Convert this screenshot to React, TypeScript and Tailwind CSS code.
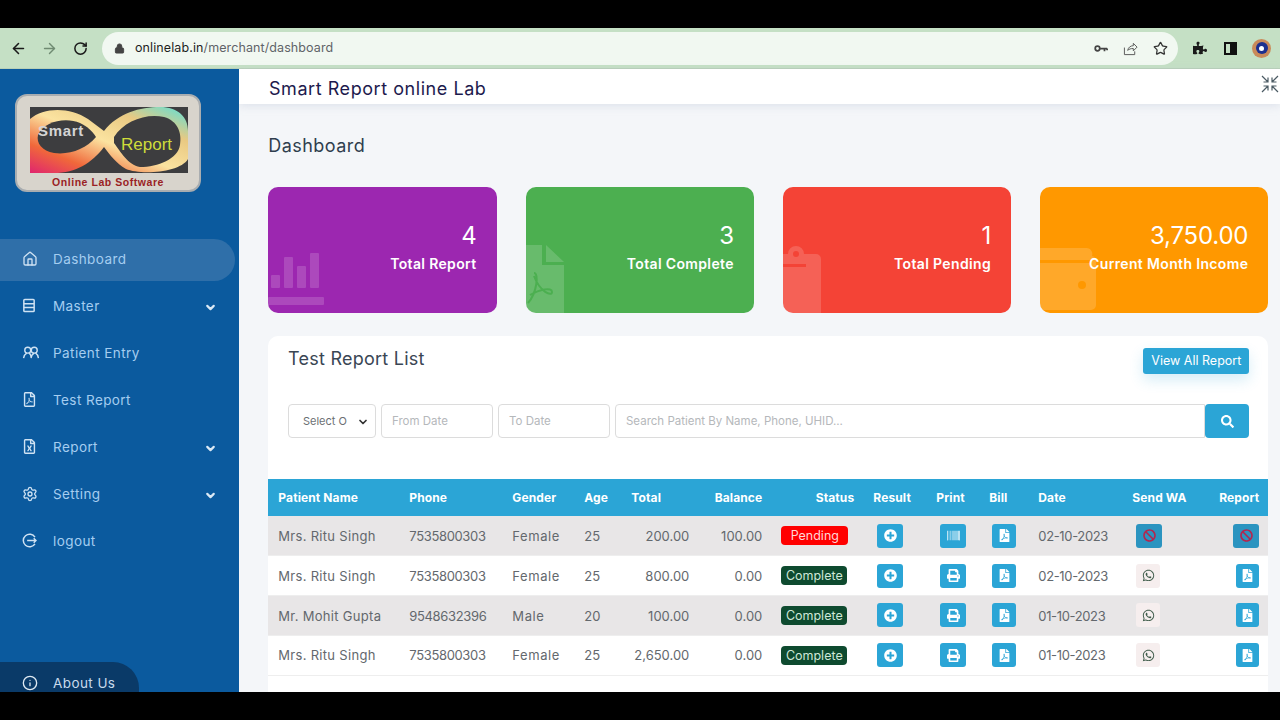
import { ArrowLeft, ArrowRight, RotateCw, Lock, Star, House, Settings, Info, ChevronDown } from "lucide-react";
import { FaPuzzlePiece, FaPlusCircle, FaPrint, FaFilePdf, FaBarcode, FaBan, FaWhatsapp, FaSearch, FaRegFilePdf, FaRegFileExcel } from "react-icons/fa";

const font = "font-['Inter','Liberation_Sans',sans-serif]";

const MasterIcon = () => (
  <svg viewBox="0 0 14 16" className="h-[15px] w-[14px]" fill="none" stroke="currentColor" strokeWidth="1.6">
    <rect x="1.5" y="1.5" width="11" height="13" rx="1" />
    <path d="M1.500 6h11M1.500 10h11" />
  </svg>
);

const PatientIcon = () => (
  <svg viewBox="0 0 18 14" className="h-[13px] w-[18px]" fill="none" stroke="currentColor" strokeWidth="1.5">
    <circle cx="5.5" cy="4.5" r="3.2" />
    <circle cx="12.5" cy="4.5" r="3.2" />
    <path d="M1 13c.4-3 2-4.600 3.400-5.400M7 7.600c1.200.7 2 2.200 2.300 5.400M9 13c.4-3 2-4.600 3.400-5.400M14 7.600c1.400.8 2.600 2.400 3 5.400" />
  </svg>
);

const LogoutIcon = () => (
  <svg viewBox="0 0 16 16" className="h-[15px] w-[15px]" fill="none" stroke="currentColor" strokeWidth="1.6">
    <path d="M13.800 4.500A6.700 6.700 0 1 0 13.800 11.500" />
    <path d="M5.500 8h9.500M12.500 5.500 15 8l-2.500 2.500" />
  </svg>
);

const nav = [
  { label: "Dashboard", icon: <House size={16} />, active: true },
  { label: "Master", icon: <MasterIcon />, arrow: true },
  { label: "Patient Entry", icon: <PatientIcon /> },
  { label: "Test Report", icon: <FaRegFilePdf size={15} /> },
  { label: "Report", icon: <FaRegFileExcel size={15} />, arrow: true },
  { label: "Setting", icon: <Settings size={16} />, arrow: true },
  { label: "logout", icon: <LogoutIcon /> },
];

const rows = [
  { name: "Mrs. Ritu Singh", phone: "7535800303", gender: "Female", age: "25", total: "200.00", balance: "100.00", status: "Pending", date: "02-10-2023" },
  { name: "Mrs. Ritu Singh", phone: "7535800303", gender: "Female", age: "25", total: "800.00", balance: "0.00", status: "Complete", date: "02-10-2023" },
  { name: "Mr. Mohit Gupta", phone: "9548632396", gender: "Male", age: "20", total: "100.00", balance: "0.00", status: "Complete", date: "01-10-2023" },
  { name: "Mrs. Ritu Singh", phone: "7535800303", gender: "Female", age: "25", total: "2,650.00", balance: "0.00", status: "Complete", date: "01-10-2023" },
];

const Logo = () => (
  <div className="ml-[15px] mt-[25px] h-[98px] w-[186px] rounded-[12px] border-2 border-[#a9adb0] bg-[#d8d4cc] px-[13px] pt-[11px]">
    <svg viewBox="0 0 158 66" className="h-[66px] w-[158px] bg-[#3d3d3f]">
      <defs>
        <linearGradient id="inf" x1="0" y1="1" x2="1" y2="0">
          <stop offset="0" stopColor="#e0256f" />
          <stop offset=".22" stopColor="#f0683a" />
          <stop offset=".48" stopColor="#fbe3a0" />
          <stop offset=".74" stopColor="#e9c982" />
          <stop offset="1" stopColor="#5ce0d8" />
        </linearGradient>
      </defs>
      <path d="M0 12C14 0 40 0 58 12L74 24C88 6 110 0 130 0 148 0 158 10 158 24V52C150 66 110 68 96 62 86 56 80 48 74 40 62 56 46 66 24 66H0Z" fill="url(#inf)" />
      <path d="M8 28C14 14 36 10 50 16 58 20 62 24 66 30 56 42 40 48 24 46 12 44 6 36 8 28Z" fill="#3d3d3f" />
      <path d="M84 30C94 14 116 6 134 10 148 14 152 26 150 38 148 52 128 60 110 60 98 58 90 44 84 36Z" fill="#3d3d3f" />
      <text x="8" y="29" fill="#d4d4d4" fontSize="15" fontWeight="700" letterSpacing=".7" fontFamily="Liberation Sans">Smart</text>
      <text x="91" y="43" fill="#cfdc3a" fontSize="17" fontFamily="Liberation Sans">Report</text>
    </svg>
    <div className="pt-[2px] text-center font-['Liberation_Sans',sans-serif] text-[10.500px] leading-[14px] font-bold tracking-[.55px] whitespace-nowrap text-[#9a1f24]">Online Lab Software</div>
  </div>
);

const Sidebar = () => (
  <aside className="relative flex h-full w-[239px] shrink-0 flex-col overflow-hidden bg-[#0b5a9e]">
    <Logo />
    <nav className="mt-[47px] flex flex-col">
      {nav.map((n) => (
        <div
          key={n.label}
          className={`mb-[5.500px] flex h-[41.500px] w-[235px] items-center rounded-r-[21px] pb-[2px] pl-[22px] pr-[18px] ${n.active ? "bg-[#2f6fa9]" : ""}`}
        >
          <span className="flex w-[31px] shrink-0 items-center text-[#cfe2f3]">{n.icon}</span>
          <span className="flex-1 text-[13.500px] tracking-[.42px] text-[#a5cdf0]">{n.label}</span>
          {n.arrow && <ChevronDown size={13} strokeWidth={4} className="mt-1 text-[#dbe9f5]" />}
        </div>
      ))}
    </nav>
    <div className="absolute bottom-0 left-0 flex h-[30px] w-[139px] items-start rounded-tr-[26px] bg-[#0a3a68] pl-[22px] pt-[14px]">
      <Info size={16} className="mr-[15px] mt-[-1px] text-[#dfe9f2]" />
      <span className="text-[13.500px] leading-[14px] tracking-[.42px] text-[#c8dbec]">About Us</span>
    </div>
  </aside>
);

const stats = [
  { value: "4", label: "Total Report", bg: "bg-[#9c27b0]" },
  { value: "3", label: "Total Complete", bg: "bg-[#4caf50]" },
  { value: "1", label: "Total Pending", bg: "bg-[#f44336]" },
  { value: "3,750.00", label: "Current Month Income", bg: "bg-[#ff9800]" },
];

const StatIcon = ({ i }: { i: number }) => {
  if (i === 0)
    return (
      <svg viewBox="0 0 56 56" className="absolute bottom-[4px] left-0 h-[56px] w-[56px]" fill="#fff" fillOpacity=".16">
        <rect x="3" y="22" width="9" height="13" rx="1" />
        <rect x="16" y="4" width="9" height="31" rx="1" />
        <rect x="29" y="13" width="9" height="22" rx="1" />
        <rect x="42" y="0" width="9" height="35" rx="1" />
        <rect x="0" y="44" width="56" height="8" rx="1" />
      </svg>
    );
  if (i === 1)
    return (
      <svg viewBox="0 0 38 68" className="absolute bottom-0 left-0 h-[68px] w-[38px]" fill="#fff" fillOpacity=".16">
        <path d="M0 0h16v20h22v48H0Z" />
        <path d="M20 0l18 17H20Z" />
        <path d="M8 28c5 0 3 20-6 30M4 50c10-6 22-8 22-3s-12 0-18-16" fill="none" stroke="#4caf50" strokeWidth="2" />
      </svg>
    );
  if (i === 2)
    return (
      <svg viewBox="0 0 38 68" className="absolute bottom-0 left-0 h-[68px] w-[38px]" fill="#fff" fillOpacity=".16">
        <path d="M0 9h5a8 8 0 0 1 16 0h12a5 5 0 0 1 5 5v54H0Z" />
        <circle cx="13" cy="9" r="3" fill="#f44336" fillOpacity="1" />
        <rect x="0" y="19" width="23" height="3" fill="#f44336" fillOpacity="1" />
      </svg>
    );
  return (
    <svg viewBox="0 0 56 62" className="absolute bottom-[3px] left-0 h-[62px] w-[56px]" fill="#fff" fillOpacity=".16">
      <path d="M0 0h46a6 6 0 0 1 6 8v0a5 5 0 0 1 4 5v44a5 5 0 0 1-5 5H0Z" />
      <rect x="0" y="12" width="50" height="3" fill="#ff9800" fillOpacity="1" />
      <circle cx="42" cy="37" r="4" fill="#ff9800" fillOpacity="1" />
    </svg>
  );
};

const IconBtn = ({ children, w = "w-[26px]" }: { children: React.ReactNode; w?: string }) => (
  <span className={`flex h-[24px] ${w} items-center justify-center rounded-[3px] bg-[#2ba5d6] text-white`}>{children}</span>
);

const Ban = () => (
  <span className="flex h-[24px] w-[26px] items-center justify-center rounded-[3px] bg-[#2b94c0]">
    <FaBan size={13} className="text-[#b3264f]" />
  </span>
);

const Wa = () => (
  <span className="flex h-[24px] w-[24px] items-center justify-center rounded-[3px] bg-[#f6eeee]">
    <FaWhatsapp size={13} className="text-[#3f5c4a]" />
  </span>
);

const heads = [
  { t: "Patient Name", c: "pl-[10px] text-left" },
  { t: "Phone", c: "pl-[10px] text-left" },
  { t: "Gender", c: "pl-[10px] text-left" },
  { t: "Age", c: "pl-[10px] text-left" },
  { t: "Total", c: "pl-[10px] text-left" },
  { t: "Balance", c: "pr-[10px] text-right" },
  { t: "Status", c: "pr-[10px] text-right" },
  { t: "Result", c: "pl-[9px] text-left" },
  { t: "Print", c: "pl-[9px] text-left" },
  { t: "Bill", c: "pl-[9px] text-left" },
  { t: "Date", c: "pl-[10px] text-left" },
  { t: "Send WA", c: "pl-[10px] text-left" },
  { t: "Report", c: "pr-[9px] text-right" },
];

const widths = ["w-[131px]", "w-[103px]", "w-[72px]", "w-[47px]", "w-[78px]", "w-[73px]", "w-[92px]", "w-[63px]", "w-[53px]", "w-[48px]", "w-[94px]", "w-[85px]", "w-[61px]"];

const ReportTable = () => (
  <table className="mt-[41px] w-[1000px] table-fixed border-collapse text-[13px] text-[#63686d]">
    <colgroup>
      {widths.map((w, i) => (
        <col key={i} className={w} />
      ))}
    </colgroup>
    <thead>
      <tr className="h-[37px] bg-[#2ba5d6] text-[12px] tracking-[.12px] text-white">
        {heads.map((h) => (
          <th key={h.t} className={`font-bold ${h.c}`}>{h.t}</th>
        ))}
      </tr>
    </thead>
    <tbody>
      {rows.map((r, i) => (
        <tr key={i} className={`h-[39.750px] border-b border-[#eee] ${i % 2 === 0 ? "bg-[#e8e6e7]" : "bg-white"}`}>
          <td className="pl-[10px] pt-[2px] tracking-[.3px]">{r.name}</td>
          <td className="pl-[10px] pt-[2px] tracking-[-.35px]">{r.phone}</td>
          <td className="pl-[10px] pt-[2px] tracking-[.6px]">{r.gender}</td>
          <td className="pl-[10px] pt-[2px]">{r.age}</td>
          <td className="pr-[10px] pt-[2px] text-right">{r.total}</td>
          <td className="pr-[10px] pt-[2px] text-right">{r.balance}</td>
          <td className="pl-[9px]">
            {r.status === "Pending" ? (
              <span className="block w-[67px] rounded-[4px] bg-[#ff0000] text-center text-[12.500px] leading-[19px] text-[#ffd6d6]">Pending</span>
            ) : (
              <span className="block w-[66px] rounded-[4px] bg-[#0e4a2f] text-center text-[12.500px] leading-[19px] text-[#cfe8d8]">Complete</span>
            )}
          </td>
          <td className="pl-[13px]"><IconBtn><FaPlusCircle size={13} /></IconBtn></td>
          <td className="pl-[13px]"><IconBtn>{i === 0 ? <FaBarcode size={13} /> : <FaPrint size={13} />}</IconBtn></td>
          <td className="pl-[12px]"><IconBtn w="w-[24px]"><FaFilePdf size={13} /></IconBtn></td>
          <td className="pl-[10px] pt-[2px] tracking-[-.35px]">{r.date}</td>
          <td className="pl-[14px]">{i === 0 ? <Ban /> : <Wa />}</td>
          <td className="pr-[9px]">
            <span className="flex justify-end">{i === 0 ? <Ban /> : <IconBtn w="w-[23px]"><FaFilePdf size={13} /></IconBtn>}</span>
          </td>
        </tr>
      ))}
    </tbody>
  </table>
);

const inputCls = "flex h-[34px] items-center rounded-[4px] border border-[#dcdcdc] bg-white pl-[10px] pt-[1px] text-[11.500px] text-[#b5b8bb]";

export default function App() {
  return (
    <div className={`flex h-[720px] w-[1280px] flex-col overflow-hidden bg-black ${font}`}>
      <div className="h-[28px] shrink-0 bg-black" />

      <div className="flex h-[41px] shrink-0 items-center border-b border-[#b8d0b8] bg-[#c5e0c5] pl-[10px]">
        <ArrowLeft size={17} strokeWidth={2.2} className="text-[#1a1a1a]" />
        <ArrowRight size={17} strokeWidth={2} className="ml-[14px] text-[#6f8a72]" />
        <RotateCw size={15} strokeWidth={2.4} className="ml-[15px] text-[#1a1a1a]" />
        <div className="ml-[14px] flex h-[33px] w-[1076px] items-center rounded-full bg-[#f1f8f1] pl-[12px] pr-[10px]">
          <Lock size={11} fill="#444" className="text-[#444]" />
          <span className="ml-[10px] flex-1 pt-[1px] text-[12.500px] tracking-[.1px] text-[#1f1f1f]">
            onlinelab.in<span className="text-[#5f6368]">/merchant/dashboard</span>
          </span>
          <svg viewBox="0 0 16 10" className="mr-[15px] h-[9px] w-[14px]" fill="none" stroke="#444" strokeWidth="2">
            <circle cx="4" cy="5" r="2.6" />
            <path d="M7 5h8M12 5v3M15 5v2" />
          </svg>
          <svg viewBox="0 0 16 16" className="mr-[15px] h-[15px] w-[15px]" fill="none" stroke="#555" strokeWidth="1">
            <path d="M1.500 7v7.500h11V11M5 10c.5-3 3-5 6-5V2.500L15 6.500l-4 4V8c-2.500 0-4.500.5-6 2Z" />
          </svg>
          <Star size={15} className="text-[#333]" />
        </div>
        <FaPuzzlePiece size={14} className="ml-[15px] text-[#1a1a1a]" />
        <span className="ml-[17px] flex h-[13px] w-[13px] justify-end border-2 border-[#111]">
          <span className="h-full w-[5px] bg-[#111]" />
        </span>
        <span className="ml-[15px] flex h-[19px] w-[19px] items-center justify-center rounded-full bg-[#c98a5a]">
          <span className="flex h-[12px] w-[12px] items-center justify-center rounded-full bg-[#1c2f8f]">
            <span className="h-[5px] w-[5px] rounded-full bg-white" />
          </span>
        </span>
      </div>

      <div className="flex min-h-0 flex-1">
        <Sidebar />
        <main className="flex min-w-0 flex-1 flex-col bg-[#f4f6f9]">
          <header className="flex h-[35px] shrink-0 items-center justify-between bg-white pl-[30px] shadow-[0_2px_8px_rgba(180,190,210,.35)]">
            <span className="pt-[3px] text-[18px] tracking-[.55px] text-[#1d1a4d]">Smart Report online Lab</span>
            <svg viewBox="0 0 18 18" className="mb-[5px] mr-[1px] h-[18px] w-[18px]" fill="none" stroke="#4a5a63" strokeWidth="1.2">
              <path d="M1 1l6 6M7 2.500V7H2.500M17 1l-6 6M11 2.500V7h4.500M1 17l6-6M7 15.500V11H2.500M17 17l-6-6M11 15.500V11h4.500" />
            </svg>
          </header>

          <div className="flex flex-col pl-[29.300px] pr-[11.700px]">
            <h1 className="mt-[31px] text-[18px] leading-[22px] tracking-[.45px] text-[#2f3e4e]">Dashboard</h1>

            <div className="mt-[30px] grid grid-cols-4 gap-[29px]">
              {stats.map((s, i) => (
                <div key={s.label} className={`relative flex h-[126px] flex-col items-end overflow-hidden rounded-[10px] pr-[20px] pt-[33px] text-white ${s.bg}`}>
                  <StatIcon i={i} />
                  <span className="relative pt-[1px] text-[24px] leading-[30px] tracking-[-.2px]">{s.value}</span>
                  <span className="relative mt-[4px] text-[14px] leading-[18px] font-semibold tracking-[.35px] whitespace-nowrap">{s.label}</span>
                </div>
              ))}
            </div>

            <section className="mt-[23px] h-[400px] rounded-t-[10px] bg-white">
              <div className="flex items-start justify-between pl-[19.700px] pr-[19px] pt-[12px]">
                <h2 className="text-[18px] leading-[22px] tracking-[.25px] text-[#3a4654]">Test Report List</h2>
                <button className="h-[26px] w-[106px] rounded-[3px] bg-[#2ba5d6] text-[12.500px] text-white shadow-[0_6px_14px_rgba(43,165,214,.2)]">View All Report</button>
              </div>
              <div className="mt-[30px] flex pl-[19.700px] pr-[19px]">
                <div className="flex h-[34px] w-[88px] items-center justify-between rounded-[4px] border border-[#dcdcdc] bg-white pl-[14px] pr-[6px] pt-[1px] text-[11px] text-[#6b6f73]">
                  Select O
                  <ChevronDown size={12} strokeWidth={3.5} className="text-[#333]" />
                </div>
                <div className={`${inputCls} ml-[5px] w-[112px]`}>From Date</div>
                <div className={`${inputCls} ml-[5px] w-[112px]`}>To Date</div>
                <div className={`${inputCls} ml-[5px] flex-1 rounded-r-none`}>Search Patient By Name, Phone, UHID...</div>
                <div className="flex h-[34px] w-[44px] items-center justify-center rounded-[4px] bg-[#2ba5d6]">
                  <FaSearch size={13} className="text-white" />
                </div>
              </div>
              <ReportTable />
            </section>
          </div>
        </main>
      </div>

      <div className="h-[28px] shrink-0 bg-black" />
    </div>
  );
}
